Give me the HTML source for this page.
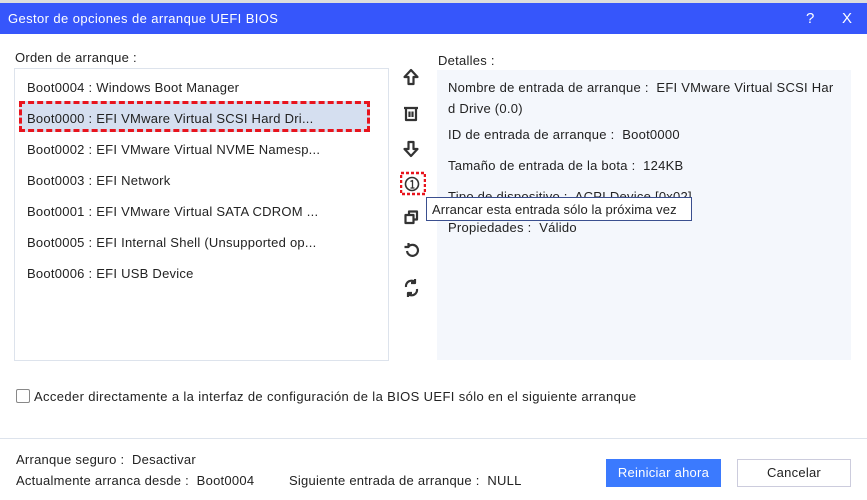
<!DOCTYPE html>
<html><head><meta charset="utf-8"><style>
*{margin:0;padding:0;box-sizing:border-box}
body{width:867px;height:500px;background:#fff;font-family:"Liberation Sans",sans-serif;font-size:13px;color:#222;position:relative;overflow:hidden;letter-spacing:0.25px}
.a{position:absolute;white-space:nowrap}
.title{left:0;top:3px;width:867px;height:31px;background:#3656fb;color:#fff;font-size:13px}
.list{left:14px;top:68px;width:375px;height:293px;border:1px solid #dde3ec}
.it{position:absolute;left:12px}
.det{left:437px;top:70px;width:414px;height:290px;background:#f4f7fc}
</style></head><body>
<div class="a" style="top:0;left:0;width:867px;height:3px;background:#ddd"></div>
<div class="a title"><span style="position:absolute;left:8px;top:8px;letter-spacing:0.4px">Gestor de opciones de arranque UEFI BIOS</span><span style="position:absolute;left:806px;top:7px;font-size:15px">?</span><span style="position:absolute;left:842px;top:7px;font-size:15px">X</span></div>
<div class="a" style="left:15px;top:50px">Orden de arranque :</div>
<div class="a" style="left:438px;top:53px">Detalles :</div>
<div class="a list">
<div class="a" style="left:4px;top:32px;width:351px;height:31px;background:#d5dff0;border:3px dashed #e8141d"></div>
<div class="it" style="top:11px">Boot0004 : Windows Boot Manager</div>
<div class="it" style="top:42px">Boot0000 : EFI VMware Virtual SCSI Hard Dri...</div>
<div class="it" style="top:73px">Boot0002 : EFI VMware Virtual NVME Namesp...</div>
<div class="it" style="top:104px">Boot0003 : EFI Network</div>
<div class="it" style="top:135px">Boot0001 : EFI VMware Virtual SATA CDROM ...</div>
<div class="it" style="top:166px">Boot0005 : EFI Internal Shell (Unsupported op...</div>
<div class="it" style="top:197px">Boot0006 : EFI USB Device</div>
</div>
<svg class="a" style="left:400px;top:66px" width="26" height="240" fill="none" stroke="#333" stroke-width="2.2" stroke-linejoin="round">
<path d="M11 4 L4.5 11 H8.5 V18 H13.5 V11 H17.5 Z"/>
<path d="M4 42 H18 M6 42 V54 H16 V42 M9.5 45.5 V51 M12.5 45.5 V51"/>
<path d="M8.5 76 V83 H4.5 L11 90 L17.5 83 H13.5 V76 Z"/>
<rect x="1" y="107" width="24" height="21" stroke="#e8141d" stroke-dasharray="3 2" stroke-width="2.5"/>
<circle cx="12" cy="118" r="6.5" stroke-width="1.6"/>
<path d="M10.5 115.5 L12.5 114.5 V122 M10.5 122 H14.5" stroke-width="1.3"/>
<path d="M5.5 149 H13.5 V157 H5.5 Z M9 149 V145.5 H17 V153.5 H13.5"/>
<path d="M7 185 A5.5 5.5 0 1 0 8.5 180.5 M8.5 177 V181 H4.5"/>
<path d="M6 221 A5.5 5.5 0 0 1 15 216 M15 213 V217 H11 M17 223 A5.5 5.5 0 0 1 8 228 M8 231 V227 H12"/>
</svg>
<div class="a det">
<div class="a" style="left:11px;top:7px;line-height:21px;white-space:normal;width:390px;word-break:break-all">Nombre de entrada de arranque :&nbsp; EFI VMware Virtual SCSI Hard Drive (0.0)</div>
<div class="a" style="left:11px;top:57px">ID de entrada de arranque :&nbsp; Boot0000</div>
<div class="a" style="left:11px;top:88px">Tamaño de entrada de la bota :&nbsp; 124KB</div>
<div class="a" style="left:11px;top:119px">Tipo de dispositivo :&nbsp; ACPI Device [0x02]</div>
<div class="a" style="left:11px;top:150px">Propiedades :&nbsp; Válido</div>
</div>
<div class="a" style="left:426px;top:197px;width:266px;height:24px;background:#fff;border:1px solid #3a4f8f;padding:4px 0 0 5px;letter-spacing:0.1px">Arrancar esta entrada sólo la próxima vez</div>
<div class="a" style="left:16px;top:389px;width:14px;height:14px;border:1px solid #888;border-radius:2px"></div>
<div class="a" style="left:34px;top:389px;letter-spacing:0.37px">Acceder directamente a la interfaz de configuración de la BIOS UEFI sólo en el siguiente arranque</div>
<div class="a" style="left:0;top:438px;width:867px;height:1px;background:#dde3ec"></div>
<div class="a" style="left:16px;top:452px">Arranque seguro :&nbsp; Desactivar</div>
<div class="a" style="left:16px;top:473px">Actualmente arranca desde :&nbsp; Boot0004</div>
<div class="a" style="left:289px;top:473px">Siguiente entrada de arranque :&nbsp; NULL</div>
<div class="a" style="left:606px;top:459px;width:115px;height:28px;background:#3b7afe;color:#fff;text-align:center;line-height:28px">Reiniciar ahora</div>
<div class="a" style="left:737px;top:459px;width:114px;height:28px;border:1px solid #ccd;text-align:center;line-height:26px">Cancelar</div>
</body></html>
